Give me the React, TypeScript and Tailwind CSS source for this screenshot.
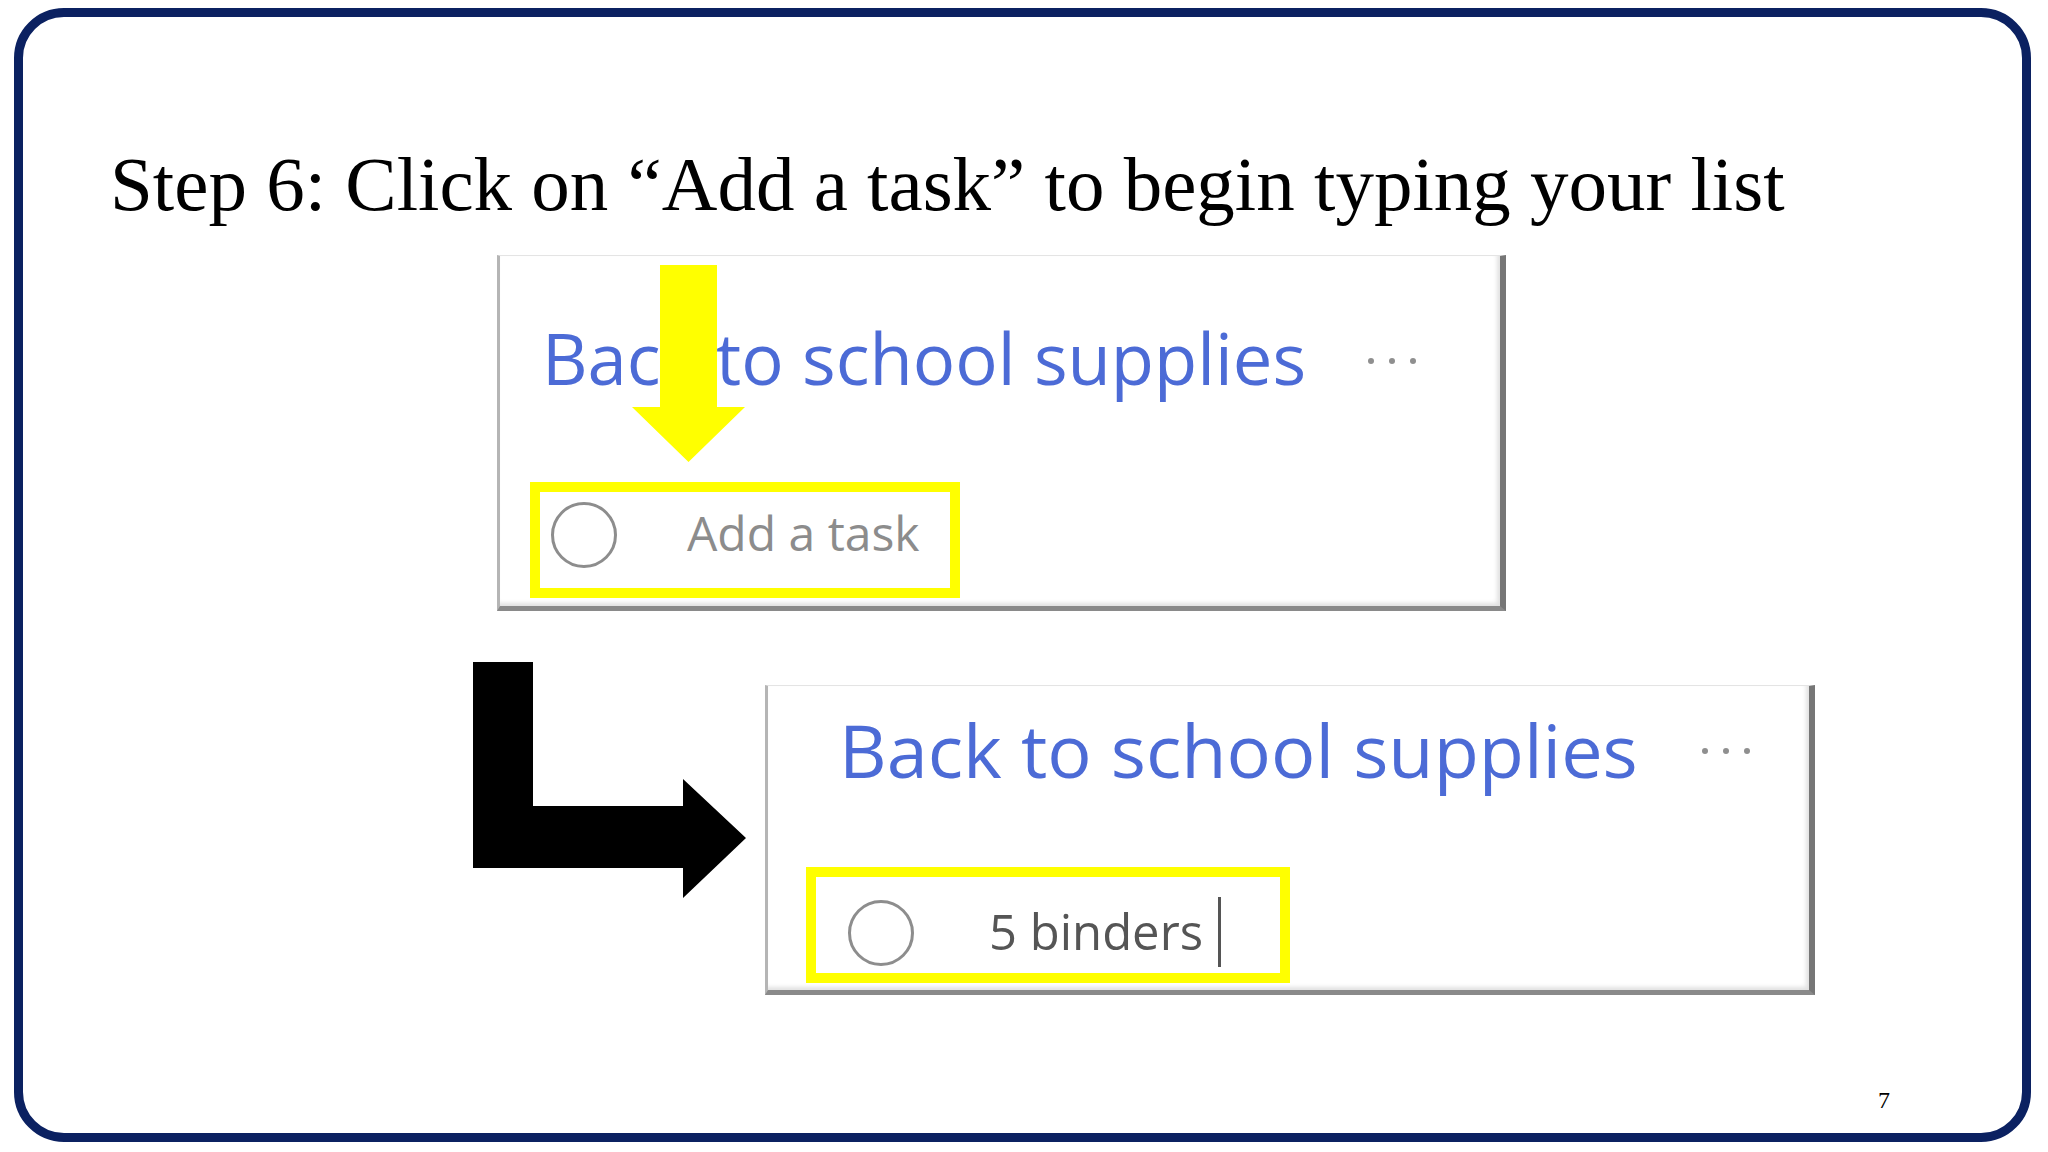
function Dots({ className = '' }: { className?: string }) {
  return (
    <div className={`flex gap-[15px] ${className}`}>
      <span className="w-[6px] h-[6px] rounded-full bg-[#8f8f8f]" />
      <span className="w-[6px] h-[6px] rounded-full bg-[#8f8f8f]" />
      <span className="w-[6px] h-[6px] rounded-full bg-[#8f8f8f]" />
    </div>
  )
}

const cardClass =
  "bg-white border-t border-t-[#e4e4e4] border-l-[3px] border-l-[#b5b5b5] border-r-[6px] border-r-[#767676] border-b-[5px] border-b-[#8a8a8a] shadow-[inset_-3px_-3px_4px_rgba(0,0,0,0.12)]"

export default function App() {
  return (
    <div className="w-[2048px] h-[1152px] bg-white pt-[8px] pl-[14px] overflow-hidden">
      <div className="w-[2017px] h-[1134px] border-[9px] border-[#0b2161] rounded-[50px] flex flex-col">
        {/* Heading */}
        <h1 className="mt-[129px] pl-[87px] font-['Liberation_Serif',serif] text-[77px] leading-none font-normal text-black whitespace-nowrap">
          Step 6: Click on “Add a task” to begin typing your list
        </h1>

        {/* Before: empty list */}
        <div className={`relative ml-[474px] mt-[32px] w-[1009px] h-[356px] ${cardClass}`}>
          <div className="flex items-center justify-between pl-[42px] pr-[84px] pt-[67px]">
            <span className="h-[70px] font-['Open_Sans',sans-serif] text-[70.6px] leading-[70px] text-[#4c6bd6] whitespace-nowrap">
              Back to school supplies
            </span>
            <Dots className="mt-[6px]" />
          </div>
          <div className="ml-[30px] mt-[89px] w-[430px] h-[116px] border-[10px] border-[#ffff00] flex items-start">
            <span className="ml-[11px] mt-[10px] w-[66px] h-[66px] rounded-full border-[3px] border-[#8d8d8d]" />
            <span className="ml-[70px] mt-[17px] font-['Open_Sans',sans-serif] text-[48px] leading-none text-[#8c8c8c] whitespace-nowrap">
              Add a task
            </span>
          </div>
          <svg className="absolute left-[132px] top-[9px]" width="113" height="197" viewBox="0 0 113 197">
            <polygon points="28,0 85,0 85,142 113,142 56.5,197 0,142 28,142" fill="#ffff00" />
          </svg>
        </div>

        {/* After: typing a task */}
        <div className="flex items-start ml-[450px] mt-[51px]">
          <svg width="273" height="238" viewBox="0 0 273 238" className="shrink-0">
            <polygon points="0,0 60,0 60,144 210,144 210,117 273,176 210,236 210,206 0,206" fill="#000" />
          </svg>
          <div className={`ml-[19px] mt-[23px] w-[1050px] h-[310px] shrink-0 ${cardClass}`}>
            <div className="flex items-center justify-between pl-[71px] pr-[59px] pt-[27px]">
              <span className="h-[73px] font-['Open_Sans',sans-serif] text-[73.8px] leading-[73px] text-[#4c6bd6] whitespace-nowrap">
                Back to school supplies
              </span>
              <Dots className="mt-[3px]" />
            </div>
            <div className="ml-[38px] mt-[81px] w-[484px] h-[116px] border-[10px] border-[#ffff00] flex items-start">
              <span className="ml-[32px] mt-[23px] w-[66px] h-[66px] rounded-full border-[3px] border-[#8d8d8d]" />
              <span className="ml-[75px] mt-[30px] font-['Open_Sans',sans-serif] text-[49px] leading-none text-[#555555] whitespace-nowrap">
                5 binders
              </span>
              <span className="ml-[15px] mt-[20px] w-[3px] h-[70px] bg-[#555555]" />
            </div>
          </div>
        </div>

        {/* Page number */}
        <div className="mt-auto flex justify-end pr-[132px] pb-[21px]">
          <span className="font-['Liberation_Serif',serif] text-[24px] leading-none text-black">7</span>
        </div>
      </div>
    </div>
  )
}
